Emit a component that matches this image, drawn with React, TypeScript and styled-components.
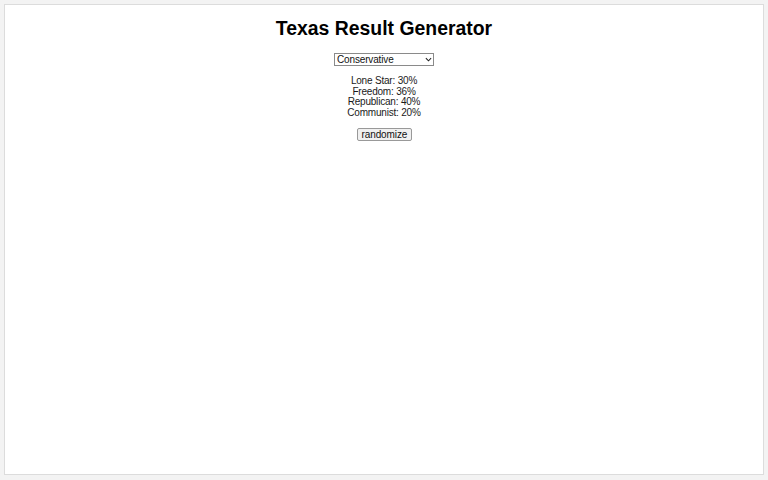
import { useState } from 'react';
import styled, { createGlobalStyle } from 'styled-components';

const GlobalStyle = createGlobalStyle`
  html, body {
    margin: 0;
    padding: 0;
    background: #f3f3f3;
    font-family: "Liberation Sans", Arial, sans-serif;
  }
`;

const results: Record<string, { party: string; pct: number }[]> = {
  Conservative: [
    { party: 'Lone Star', pct: 30 },
    { party: 'Freedom', pct: 36 },
    { party: 'Republican', pct: 40 },
    { party: 'Communist', pct: 20 },
  ],
  Liberal: [
    { party: 'Lone Star', pct: 20 },
    { party: 'Freedom', pct: 25 },
    { party: 'Republican', pct: 30 },
    { party: 'Communist', pct: 25 },
  ],
};

export default function App() {
  const [mode, setMode] = useState('Conservative');
  const rows = results[mode];

  return (
    <>
      <GlobalStyle />
      <Page>
        <Card>
          <Title>Texas Result Generator</Title>
          <SelectWrap>
            <Select value={mode} onChange={(e) => setMode(e.target.value)}>
              <option>Conservative</option>
              <option>Liberal</option>
            </Select>
            <Chevron viewBox="0 0 8 5" width="7" height="5">
              <path d="M1 1 L4 4 L7 1" fill="none" stroke="#222" strokeWidth="1.2" />
            </Chevron>
          </SelectWrap>
          <ResultList>
            {rows.map((r) => (
              <ResultLine key={r.party}>
                {r.party}: {r.pct}%
              </ResultLine>
            ))}
          </ResultList>
          <Button>randomize</Button>
        </Card>
      </Page>
    </>
  );
}

const Page = styled.div`
  box-sizing: border-box;
  height: 480px;
  padding: 4px 4px 5px 4px;
  display: flex;
`;

const Card = styled.div`
  box-sizing: border-box;
  flex: 1;
  background: #ffffff;
  border: 1px solid #dcdcdc;
  display: flex;
  flex-direction: column;
  align-items: center;
  padding-top: 12px;
`;

const Title = styled.h1`
  margin: 0 0 13px;
  font-size: 19.4px;
  font-weight: bold;
  color: #000;
  line-height: 23px;
`;

const SelectWrap = styled.div`
  position: relative;
  width: 100px;
  height: 13px;
`;

const Select = styled.select`
  appearance: none;
  display: block;
  box-sizing: border-box;
  width: 100px;
  height: 13px;
  font-family: "Liberation Sans", Arial, sans-serif;
  font-size: 10px;
  letter-spacing: -0.15px;
  line-height: 11px;
  padding: 0 0 0 2px;
  border: 1px solid #8a8a8a;
  border-radius: 0;
  background: #fff;
  color: #111;
  outline: none;
`;

const Chevron = styled.svg`
  position: absolute;
  right: 2px;
  top: 4px;
  pointer-events: none;
`;

const ResultList = styled.div`
  margin: 10px 0 9px;
  display: flex;
  flex-direction: column;
  align-items: center;
`;

const ResultLine = styled.div`
  font-size: 10px;
  letter-spacing: -0.2px;
  line-height: 10.7px;
  color: #1a1a1a;
`;

const Button = styled.button`
  box-sizing: border-box;
  font-family: "Liberation Sans", Arial, sans-serif;
  font-size: 10px;
  letter-spacing: -0.1px;
  padding: 0 4px;
  width: 55px;
  height: 13px;
  line-height: 11px;
  border: 1px solid #999;
  border-radius: 2px;
  background: #f0f0f0;
  color: #111;
`;
